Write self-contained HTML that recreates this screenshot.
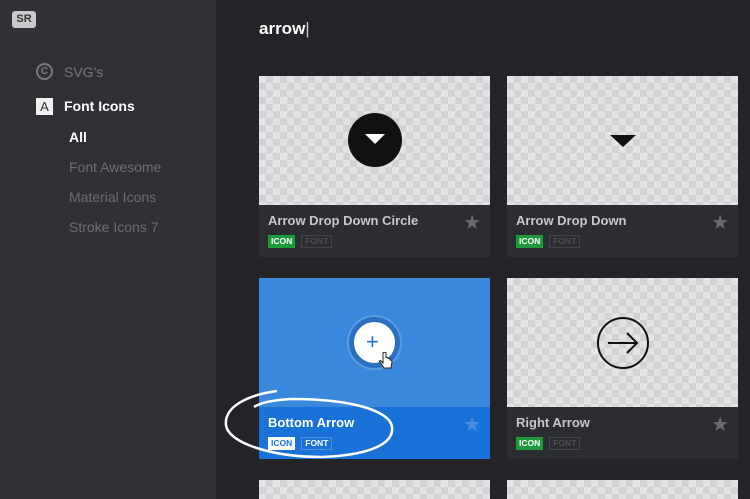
<!DOCTYPE html>
<html style="width:750px;height:499px;overflow:hidden"><head><style>
*{margin:0;padding:0;box-sizing:border-box}
body{width:750px;height:499px;overflow:hidden;background:#232427;font-family:"Liberation Sans",sans-serif;position:relative}
.side{position:absolute;left:0;top:0;width:216px;height:499px;background:#303135}
.sr{position:absolute;left:12px;top:11px;width:24px;height:17px;background:#c9c9cb;border-radius:3px;font-size:11px;font-weight:bold;color:#333;text-align:center;line-height:17px}
.nav{position:absolute;font-size:14px}
.card{position:absolute;width:231px;height:181px;background:#2c2d31;overflow:hidden}
.img{position:absolute;left:0;top:0;width:231px;height:129px;background-color:#e3e3e5;background-image:linear-gradient(45deg,#d3d3d6 25%,transparent 25%,transparent 75%,#d3d3d6 75%),linear-gradient(45deg,#d3d3d6 25%,transparent 25%,transparent 75%,#d3d3d6 75%);background-size:14px 14px;background-position:0 0,7px 7px}
.t{position:absolute;left:9px;top:137px;font-size:13px;font-weight:bold;color:#c8c8ca}
.tags{position:absolute;left:9px;top:159px;display:flex;gap:6px}
.tag{font-size:8.5px;font-weight:bold;height:13px;line-height:13px;padding:0 3px}
.ic{background:#1d9b3b;color:#fff}
.fo{border:1px solid #444;color:#4c4d52;line-height:11px}
.star{position:absolute;right:9px;top:134px;color:#6b6c70;font-size:20px}
</style></head><body>
<div class="side">
<div class="sr">SR</div>
<div class="nav" style="left:36px;top:63px;width:17px;height:17px;border:2px solid #77787c;border-radius:50%;font-size:10px;color:#77787c;text-align:center;line-height:13px;font-weight:bold">C</div>
<div class="nav" style="left:64px;top:64px;color:#77787c">SVG's</div>
<div class="nav" style="left:36px;top:98px;width:17px;height:17px;background:#f0f0f0;color:#333;font-size:13px;text-align:center;line-height:17px">A</div>
<div class="nav" style="left:64px;top:98px;color:#fff;font-weight:bold">Font Icons</div>
<div class="nav" style="left:69px;top:129px;color:#fff;font-weight:bold">All</div>
<div class="nav" style="left:69px;top:159px;color:#6c6d71">Font Awesome</div>
<div class="nav" style="left:69px;top:189px;color:#6c6d71">Material Icons</div>
<div class="nav" style="left:69px;top:219px;color:#6c6d71">Stroke Icons 7</div>
</div>
<div style="position:absolute;left:259px;top:19px;font-size:17px;font-weight:bold;color:#fff">arrow<span style="font-weight:normal;color:#ccc">|</span></div>

<div class="card" style="left:259px;top:76px"><div class="img"><div style="position:absolute;left:89px;top:37px;width:54px;height:54px;border-radius:50%;background:#111"></div><div style="position:absolute;left:106px;top:58px;border-left:10px solid transparent;border-right:10px solid transparent;border-top:10px solid #fff"></div></div>
<div class="t">Arrow Drop Down Circle</div><div class="star">★</div><div class="tags"><span class="tag ic">ICON</span><span class="tag fo">FONT</span></div></div>

<div class="card" style="left:507px;top:76px"><div class="img"><div style="position:absolute;left:103px;top:59px;border-left:13px solid transparent;border-right:13px solid transparent;border-top:12px solid #111"></div></div>
<div class="t">Arrow Drop Down</div><div class="star">★</div><div class="tags"><span class="tag ic">ICON</span><span class="tag fo">FONT</span></div></div>

<div class="card" style="left:259px;top:278px;background:#1a72d9"><div class="img" style="background:#3a88dc"><div style="position:absolute;left:90px;top:39px;width:51px;height:51px;border-radius:50%;background:#fff;border:5px solid #2a6fc0;box-shadow:0 0 0 2px #5a9ce2"></div><div style="position:absolute;left:107px;top:51px;font-size:22px;color:#1a72d9">+</div><svg style="position:absolute;left:120px;top:74px" width="14" height="18" viewBox="0 0 14 18"><path d="M4 1V11L2 9C1 8 0 9 1 10L5 16H12L13 10C13 8 12 8 11 8V7C11 6 9 6 9 7V6C9 5 7 5 7 6V1C7 0 4 0 4 1Z" fill="#fff" stroke="#222" stroke-width="1"/></svg></div>
<div class="t" style="color:#fff">Bottom Arrow</div><div class="star" style="color:#4a8fe0">★</div><div class="tags"><span class="tag" style="background:#fff;color:#1a72d9">ICON</span><span class="tag" style="border:1px solid #4a90e0;color:#fff;line-height:11px">FONT</span></div></div>

<div class="card" style="left:507px;top:278px"><div class="img"><svg style="position:absolute;left:89px;top:38px" width="54" height="54" viewBox="0 0 54 54" fill="none" stroke="#111" stroke-width="2"><circle cx="27" cy="27" r="25"/><path d="M12 27H41M31 17L41 27L31 37"/></svg></div>
<div class="t">Right Arrow</div><div class="star">★</div><div class="tags"><span class="tag ic">ICON</span><span class="tag fo">FONT</span></div></div>

<div class="card" style="left:259px;top:480px;height:19px"><div class="img"></div></div>
<div class="card" style="left:507px;top:480px;height:19px"><div class="img"></div></div>

<svg style="position:absolute;left:222px;top:385px" width="180" height="80" viewBox="0 0 180 80" fill="none" stroke="#fff" stroke-width="2.5"><path d="M55 6C25 10 2 22 4 40C6 58 50 72 100 72C150 70 172 58 170 42C168 26 130 14 70 14C50 15 38 18 32 22"/></svg>
</body></html>
